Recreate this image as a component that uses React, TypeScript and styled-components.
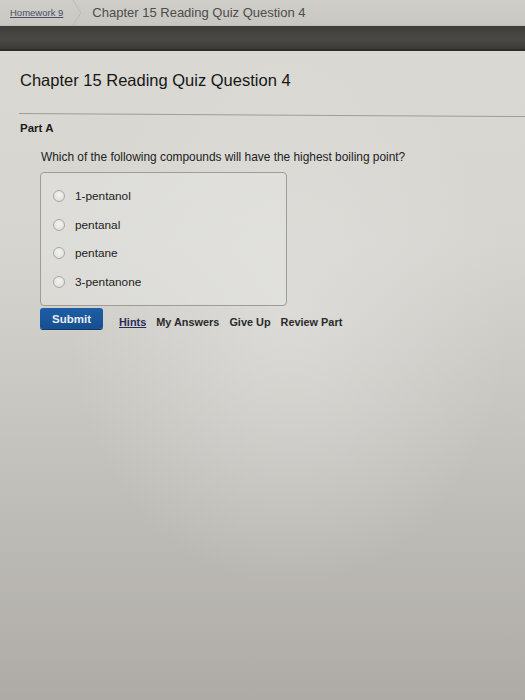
import React from "react";
import styled, { createGlobalStyle } from "styled-components";

const GlobalStyle = createGlobalStyle`
  html, body {
    margin: 0;
    padding: 0;
  }
  body {
    width: 525px;
    height: 700px;
    overflow: hidden;
    font-family: "Liberation Sans", Arial, sans-serif;
    color: #222;
  }
`;

const options = ["1-pentanol", "pentanal", "pentane", "3-pentanone"];

const App = () => {
  return (
    <>
      <GlobalStyle />
      <Screen>
        <TopBar>
          <Crumb href="#">Homework 9</Crumb>
          <Chevron viewBox="0 0 10 26" aria-hidden>
            <path d="M1 0 L9 13 L1 26" fill="none" stroke="#b9b9b4" strokeWidth="1" />
          </Chevron>
          <CrumbTitle>Chapter 15 Reading Quiz Question 4</CrumbTitle>
        </TopBar>
        <DarkBar />
        <Content>
          <Title>Chapter 15 Reading Quiz Question 4</Title>
          <Divider />
          <PartLabel>Part A</PartLabel>
          <Question>
            Which of the following compounds will have the highest boiling point?
          </Question>
          <ChoiceBox>
            {options.map((opt) => (
              <Choice key={opt}>
                <Radio />
                <ChoiceText>{opt}</ChoiceText>
              </Choice>
            ))}
          </ChoiceBox>
          <Actions>
            <SubmitButton>Submit</SubmitButton>
            <ActionLink underline>Hints</ActionLink>
            <ActionLink>My Answers</ActionLink>
            <ActionLink>Give Up</ActionLink>
            <ActionLink>Review Part</ActionLink>
          </Actions>
        </Content>
      </Screen>
    </>
  );
};

export default App;

const Screen = styled.div`
  width: 525px;
  height: 700px;
  display: flex;
  flex-direction: column;
  background:
    radial-gradient(ellipse 60% 55% at 55% 45%, rgba(230, 230, 226, 0.55), rgba(230, 230, 226, 0) 70%),
    linear-gradient(180deg, #dad9d4 0%, #d6d5d0 35%, #c4c2bd 65%, #aeaba6 100%);
`;

const TopBar = styled.div`
  height: 25px;
  display: flex;
  align-items: center;
  padding-left: 10px;
  background: linear-gradient(180deg, #cfcec9, #c8c7c2);
  border-bottom: 1px solid #bdbcb7;
`;

const Crumb = styled.a`
  font-size: 9.5px;
  color: #4a4e66;
  text-decoration: underline;
`;

const Chevron = styled.svg`
  width: 10px;
  height: 25px;
  margin: 0 10px 0 9px;
`;

const CrumbTitle = styled.span`
  font-size: 13px;
  color: #4d4d4b;
`;

const DarkBar = styled.div`
  height: 23px;
  background: linear-gradient(180deg, #3f3d3a, #4b4946 60%, #3c3a37);
  border-bottom: 2px solid #2e2c2a;
`;

const Content = styled.div`
  display: flex;
  flex-direction: column;
  align-items: flex-start;
  padding: 0 0 0 19px;
`;

const Title = styled.h1`
  margin: 20px 0 0 1px;
  font-size: 16.5px;
  font-weight: normal;
  color: #161616;
`;

const Divider = styled.div`
  align-self: stretch;
  height: 1px;
  margin-top: 23px;
  background: #9f9e99;
  transform: rotate(0.35deg);
  transform-origin: left center;
`;

const PartLabel = styled.div`
  margin: 8px 0 0 1px;
  font-size: 11.5px;
  font-weight: bold;
  color: #1c1c1c;
`;

const Question = styled.div`
  margin: 16px 0 0 22px;
  font-size: 11.9px;
  color: #222;
`;

const ChoiceBox = styled.div`
  margin: 8px 0 0 21px;
  width: 247px;
  height: 134px;
  box-sizing: border-box;
  padding: 15px 0 0 12px;
  border: 1px solid #9d9c97;
  border-radius: 4px;
  display: flex;
  flex-direction: column;
  gap: 12.5px;
  background: rgba(228, 228, 224, 0.55);
`;

const Choice = styled.div`
  display: flex;
  align-items: center;
  gap: 10px;
  height: 16px;
`;

const Radio = styled.span`
  width: 10px;
  height: 10px;
  border-radius: 50%;
  border: 1px solid #a9a8a4;
  background: radial-gradient(circle at 50% 40%, #f4f4f1, #dcdbd7);
`;

const ChoiceText = styled.span`
  font-size: 11.8px;
  color: #222;
`;

const Actions = styled.div`
  margin: 2px 0 0 21px;
  display: flex;
  align-items: center;
`;

const SubmitButton = styled.button`
  width: 63px;
  height: 21px;
  border: none;
  border-radius: 3px;
  background: linear-gradient(180deg, #1d5ea6, #174f8f);
  color: #e8eef6;
  font-family: inherit;
  font-size: 11.5px;
  font-weight: bold;
  margin-right: 16px;
  box-shadow: 0 1px 0 #0f3a6b;
`;

const ActionLink = styled.span<{ underline?: boolean }>`
  font-size: 10.9px;
  font-weight: bold;
  color: ${({ underline }) => (underline ? "#2a2d5a" : "#2b2b2b")};
  text-decoration: ${({ underline }) => (underline ? "underline" : "none")};
  margin-right: 10px;
  margin-top: 6px;
`;
